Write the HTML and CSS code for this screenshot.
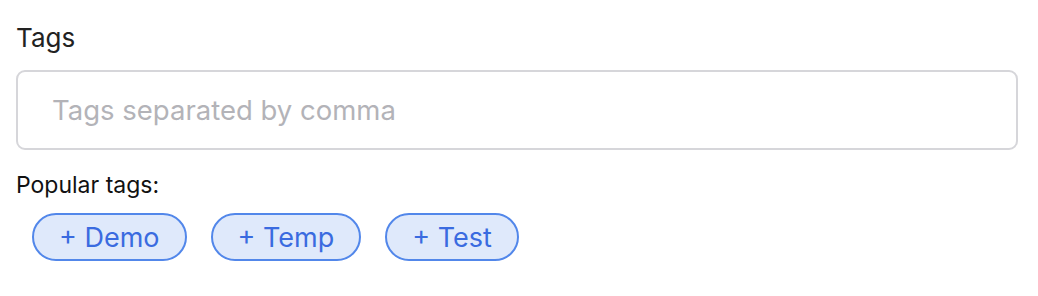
FILE: index.html
```html
<!DOCTYPE html>
<html>
<head>
<meta charset="utf-8">
<link rel="stylesheet" href="styles.css">
</head>
<body>
<div class="field">
  <label class="label" for="tags">Tags</label>
  <input id="tags" class="input" type="text" placeholder="Tags separated by comma">
  <div class="popular-title">Popular tags:</div>
  <div class="chips">
    <button class="chip">+ Demo</button>
    <button class="chip">+ Temp</button>
    <button class="chip">+ Test</button>
  </div>
</div>
</body>
</html>
```
FILE: styles.css
```css
* { box-sizing: border-box; }
html, body { margin: 0; background: #fff; }
body {
  font-family: Inter, "Noto Sans", sans-serif;
  padding: 20px 20px 0 16px;
}
.field { display: flex; flex-direction: column; }
.label {
  font-size: 26px;
  line-height: 36px;
  color: #222;
  margin-bottom: 14px;
}
.input {
  width: 1002px;
  height: 80px;
  border: 2px solid #d6d6da;
  border-radius: 9px;
  padding: 0 34px;
  font-family: inherit;
  font-size: 27.5px;
  color: #222;
  outline: none;
}
.input::placeholder { color: #b3b3b8; }
.popular-title {
  margin-top: 21px;
  font-size: 23px;
  line-height: 28px;
  color: #111;
}
.chips {
  display: flex;
  gap: 24px;
  margin-top: 14px;
  padding-left: 16px;
}
.chip {
  height: 48px;
  padding: 0 25px;
  border: 2px solid #5287ea;
  background: #dfe9fb;
  color: #3a6be0;
  border-radius: 24px;
  font-family: inherit;
  font-size: 27px;
  line-height: 1;
}
```
